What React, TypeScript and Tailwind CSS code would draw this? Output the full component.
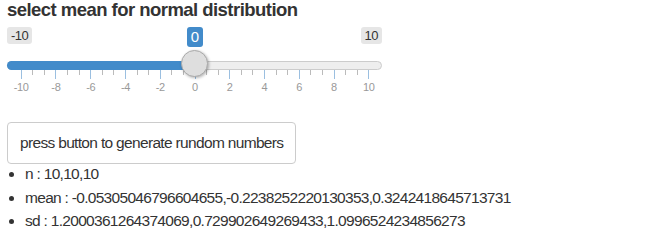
import React from "react";

const majors = [-10, -8, -6, -4, -2, 0, 2, 4, 6, 8, 10];
const x0 = 13.7;
const unit = 17.38;

function Slider() {
  const ticks: { x: number; major: boolean }[] = [];
  for (let i = 0; i <= 30; i++) {
    const v = -10 + (i * 2) / 3;
    ticks.push({ x: x0 + (v + 10) * unit, major: i % 3 === 0 });
  }
  return (
    <div className="relative w-[375px] h-[72px] mt-[2px]">
      <div className="flex justify-between items-start">
        <span className="mt-[5px] rounded-[3px] bg-[#e6e6e6] px-[4px] h-[17px] leading-[17px] text-[13px] tracking-[-0.5px] text-[#333]">-10</span>
        <span className="mt-[5px] rounded-[3px] bg-[#e6e6e6] px-[4px] h-[17px] leading-[17px] text-[13px] tracking-[-0.5px] text-[#333]">10</span>
      </div>
      <span className="absolute left-[180px] top-[5px] w-[16px] h-[20px] rounded-[3px] bg-[#428bca] text-white text-[15px] leading-[20px] text-center">0</span>
      <div className="absolute left-0 right-0 top-[39px] h-[9px] rounded-full bg-[#eeeeee] border border-[#cccccc]" />
      <div className="absolute left-0 w-[188px] top-[39px] h-[9px] rounded-l-full bg-[#428bca]" />
      {ticks.map((t, i) => (
        <span
          key={i}
          className={t.major ? "absolute top-[48px] w-px h-[9px] bg-[#9bbfe0]" : "absolute top-[48px] w-px h-[5px] bg-[#bbbbbb]"}
          style={{ left: t.x }}
        />
      ))}
      {majors.map((v) => (
        <span
          key={v}
          className="absolute top-[59px] w-[30px] -ml-[15px] text-center text-[11px] tracking-[-0.3px] leading-[13px] text-[#999999]"
          style={{ left: x0 + (v + 10) * unit + 0.5 }}
        >
          {v}
        </span>
      ))}
      <div className="absolute left-[174px] top-[28px] w-[27px] h-[27px] rounded-full bg-[#dedede] border border-[#aaaaaa] shadow-[1px_1px_3px_rgba(0,0,0,0.3)]" />
    </div>
  );
}

export default function App() {
  return (
    <div className="pl-[7px] pt-0 text-[#333] font-['Liberation_Sans',Arial,sans-serif]">
      <div className="text-[18.5px] tracking-[-0.54px] font-bold leading-[20px]">select mean for normal distribution</div>
      <Slider />
      <button className="mt-[28px] h-[42px] px-[12px] rounded-[4px] border border-[#cccccc] bg-white text-[15.5px] tracking-[-0.67px] text-[#333] whitespace-nowrap">
        press button to generate rundom numbers
      </button>
      <ul className="list-disc pl-[18px] text-[15.5px] tracking-[-0.7px] leading-[23.5px] -mt-[2px]">
        <li>n : 10,10,10</li>
        <li>mean : -0.05305046796604655,-0.2238252220130353,0.3242418645713731</li>
        <li>sd : 1.2000361264374069,0.729902649269433,1.0996524234856273</li>
      </ul>
    </div>
  );
}
